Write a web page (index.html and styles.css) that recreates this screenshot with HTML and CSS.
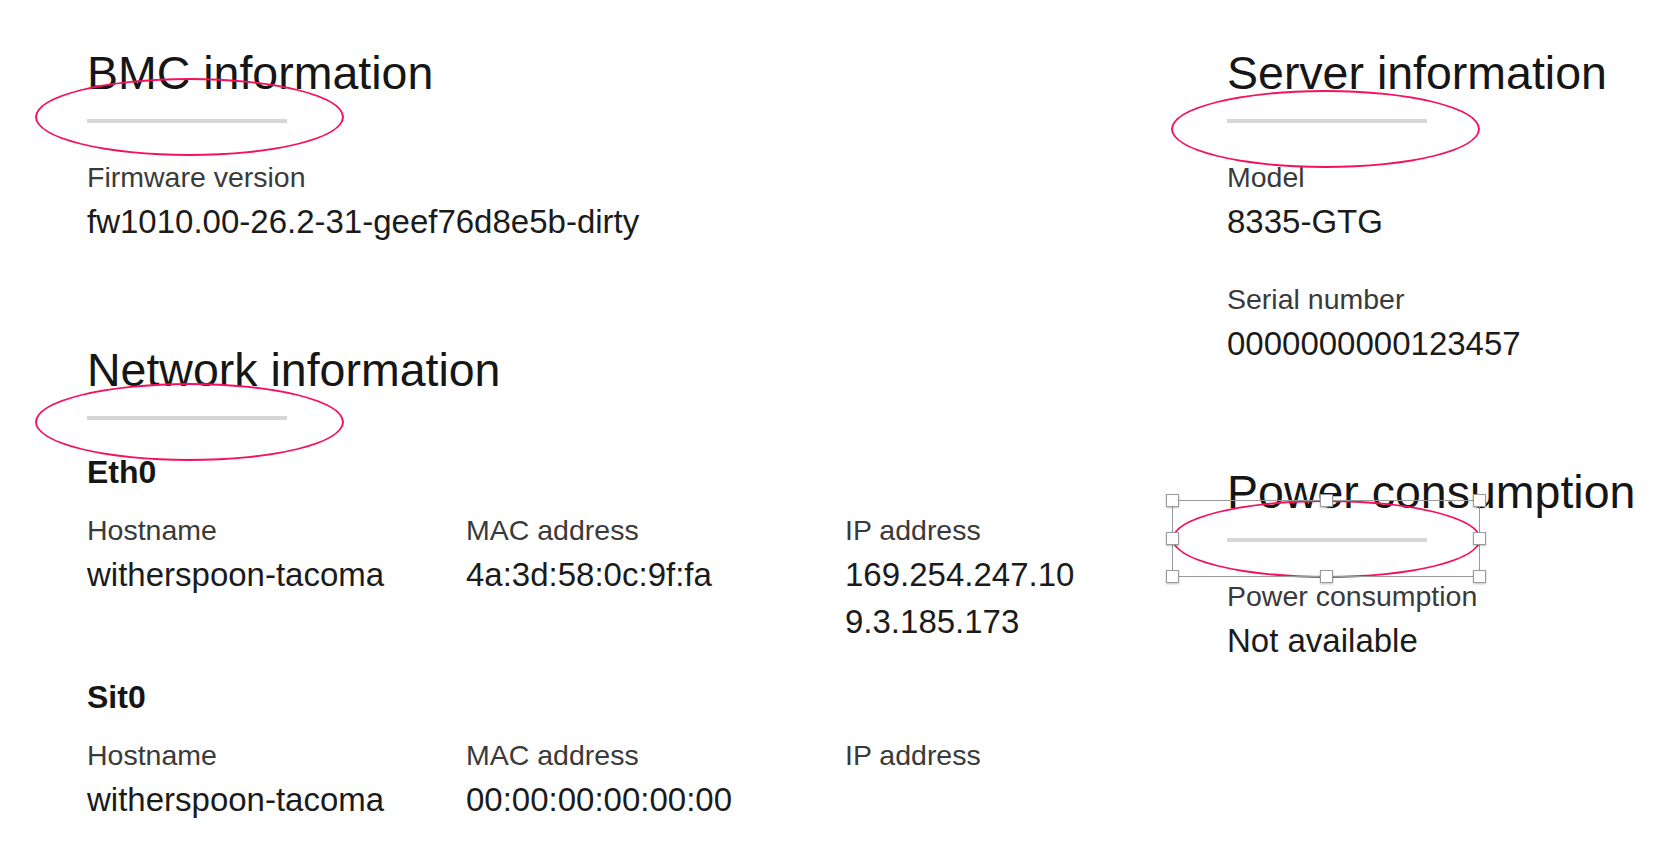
FILE: index.html
```html
<!DOCTYPE html>
<html lang="en">
<head>
    <meta charset="UTF-8">
    <meta name="viewport" content="width=device-width, initial-scale=1.0">
    <title>Overview</title>
    <link rel="stylesheet" href="styles.css">
</head>
<body>

    <main class="page">
        <div class="col-main">
            <section class="section">
                <h2 class="section-title">BMC information</h2>
                <dl class="item">
                    <dt>Firmware version</dt>
                    <dd>fw1010.00-26.2-31-geef76d8e5b-dirty</dd>
                </dl>
            </section>

            <section class="section">
                <h2 class="section-title">Network information</h2>

                <div class="iface">
                    <h3>Eth0</h3>
                    <div class="iface-row">
                        <dl class="item"><dt>Hostname</dt><dd>witherspoon-tacoma</dd></dl>
                        <dl class="item"><dt>MAC address</dt><dd>4a:3d:58:0c:9f:fa</dd></dl>
                        <dl class="item"><dt>IP address</dt><dd>169.254.247.10</dd><dd>9.3.185.173</dd></dl>
                    </div>
                </div>

                <div class="iface">
                    <h3>Sit0</h3>
                    <div class="iface-row">
                        <dl class="item"><dt>Hostname</dt><dd>witherspoon-tacoma</dd></dl>
                        <dl class="item"><dt>MAC address</dt><dd>00:00:00:00:00:00</dd></dl>
                        <dl class="item"><dt>IP address</dt></dl>
                    </div>
                </div>
            </section>
        </div>

        <div class="col-side">
            <section class="section">
                <h2 class="section-title">Server information</h2>
                <dl class="item">
                    <dt>Model</dt>
                    <dd>8335-GTG</dd>
                </dl>
                <dl class="item">
                    <dt>Serial number</dt>
                    <dd>0000000000123457</dd>
                </dl>
            </section>

            <section class="section">
                <h2 class="section-title">Power consumption</h2>
                <dl class="item">
                    <dt>Power consumption</dt>
                    <dd>Not available</dd>
                </dl>
            </section>
        </div>
    </main>

    <!-- review marks drawn on top of the page -->
    <div class="marks">
        <span class="ring ring-bmc"></span>
        <span class="ring ring-server"></span>
        <span class="ring ring-network"></span>
        <span class="ring ring-power"></span>
        <div class="selection">
            <span class="handle h-tl"></span>
            <span class="handle h-tm"></span>
            <span class="handle h-tr"></span>
            <span class="handle h-ml"></span>
            <span class="handle h-mr"></span>
            <span class="handle h-bl"></span>
            <span class="handle h-bm"></span>
            <span class="handle h-br"></span>
        </div>
    </div>

</body>
</html>
```

FILE: styles.css
```css
body {
    margin: 0;
    font-family: "Liberation Sans", Arial, sans-serif;
    color: #161616;
    background: #fff;
    overflow: hidden;
}

.page {
    display: grid;
    grid-template-columns: 1140px 1fr;
    padding: 46px 0 0 87px;
}

.section {
    display: flow-root;
    margin-bottom: 64px;
}

.section:last-child {
    margin-bottom: 0;
}

.section-title {
    margin: 0 0 34px;
    font-size: 46.5px;
    font-weight: 400;
    line-height: 55px;
    white-space: nowrap;
}

.section-title::after {
    content: "";
    display: block;
    width: 200px;
    height: 4px;
    margin-top: 18px;
    background: #d6d6d8;
}

.item {
    margin: 0 0 34px;
}

.item dt {
    font-size: 28.5px;
    line-height: 41px;
    color: #3a3a3a;
}

.item dd {
    margin: 0;
    font-size: 33px;
    line-height: 47px;
    color: #1b1b1b;
}

.iface {
    margin-bottom: 34px;
}

.iface:last-child {
    margin-bottom: 0;
}

.iface h3 {
    margin: 0 0 22px;
    padding-top: 2px;
    font-size: 32px;
    font-weight: 700;
    line-height: 32px;
}

.iface-row {
    display: grid;
    grid-template-columns: repeat(3, 379px);
}

.iface-row .item {
    margin: 0;
}

/* annotation layer */
.marks {
    position: absolute;
    inset: 0;
    pointer-events: none;
}

.ring {
    position: absolute;
    width: 305px;
    height: 74px;
    border: 2px solid #f5125c;
    border-radius: 50%;
}

.ring-bmc { left: 35px; top: 78px; }
.ring-server { left: 1171px; top: 90px; }
.ring-network { left: 35px; top: 383px; }
.ring-power { left: 1172px; top: 500px; }

.selection {
    position: absolute;
    left: 1172px;
    top: 500px;
    width: 306px;
    height: 75px;
    border: 1px solid #9a9a9a;
}

.handle {
    position: absolute;
    width: 11px;
    height: 11px;
    background: #fff;
    border: 1px solid #9a9a9a;
    box-shadow: 0 1px 2px rgba(0, 0, 0, 0.25);
}

.h-tl { left: -7px; top: -7px; }
.h-tm { left: 147px; top: -7px; }
.h-tr { right: -7px; top: -7px; }
.h-ml { left: -7px; top: 31px; }
.h-mr { right: -7px; top: 31px; }
.h-bl { left: -7px; bottom: -7px; }
.h-bm { left: 147px; bottom: -7px; }
.h-br { right: -7px; bottom: -7px; }
```
